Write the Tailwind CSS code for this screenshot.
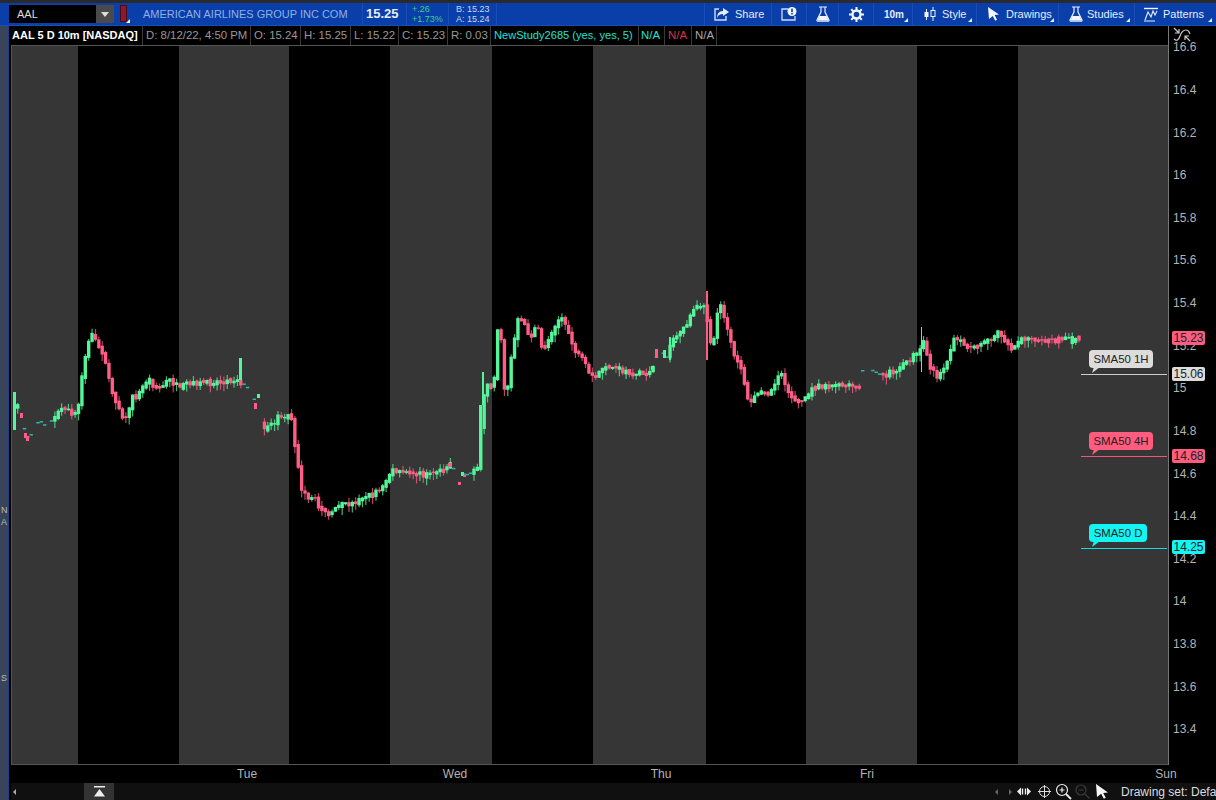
<!DOCTYPE html>
<html lang="en">
<head>
  <meta charset="UTF-8">
  <title>AAL chart</title>
  <script src="https://cdn.jsdelivr.net/npm/@tailwindcss/browser@4"></script>
</head>
<body class="bg-black w-[1216px] h-[800px] overflow-hidden font-['Liberation_Sans',Arial,sans-serif] text-[12px]">

  <!-- top strip -->
  <div class="h-[3px] bg-[#2a2a2c]"></div>

  <!-- blue header -->
  <header class="h-[23px] bg-[#0a3ea8] flex items-center text-white border-b border-[#1a4db5]">
    <div class="ml-[9px] w-[105px] h-[18px] bg-black flex items-center justify-between">
      <span class="pl-2 text-[11px] text-[#ddd]">AAL</span>
      <span class="w-[18px] h-[18px] bg-[#4a4a4a] flex items-center justify-center">
        <span class="w-0 h-0 border-x-[4px] border-x-transparent border-t-[5px] border-t-[#ddd]"></span>
      </span>
    </div>
    <div class="relative ml-[4px] w-[11px] h-[18px] flex justify-center">
      <span class="w-[7px] h-[17px] bg-[#8a1a2c] border border-[#4a0a18]"></span>
      <span class="absolute right-[-1px] bottom-0 w-0 h-0 border-l-[4px] border-l-transparent border-b-[4px] border-b-white"></span>
    </div>
    <div class="ml-[14px] w-[219px] text-[11px] text-[#8fb0e6] whitespace-nowrap">AMERICAN AIRLINES GROUP INC COM</div>
    <div class="w-[44px] h-full flex items-center pl-[3px] text-[13px] font-bold text-[#e8eefc] border-l border-[#1a4db5]">15.25</div>
    <div class="w-[43px] h-full flex flex-col justify-center pl-[5px] text-[9px] leading-[10px] text-[#3fd08a] border-x border-[#1a4db5]">
      <span>+.26</span><span>+1.73%</span>
    </div>
    <div class="w-[48px] h-full flex flex-col justify-center pl-[7px] text-[9px] leading-[10px] text-[#c9d8f5] border-r border-[#1a4db5]">
      <span>B: 15.23</span><span>A: 15.24</span>
    </div>

    <div class="ml-auto flex h-full text-[11px] text-[#e6edfb]">
      <div class="relative w-[68px] flex items-center pl-[9px] gap-[5px] border-x border-[#1a4db5]">
        <svg width="16" height="14" viewBox="0 0 16 14"><path d="M5 2H1v11h11V9" fill="none" stroke="#cfdcf5" stroke-width="1.4"/><path d="M9 1l6 4-6 4V7C6 7 4 8 3 11c0-4 2-7 6-7z" fill="#e8eefc"/></svg>
        <span>Share</span>
      </div>
      <div class="w-[35px] flex items-center justify-center border-r border-[#1a4db5]">
        <svg width="16" height="14" viewBox="0 0 16 14"><path d="M7 2H1v11h13V9" fill="none" stroke="#cfdcf5" stroke-width="1.3"/><circle cx="11" cy="4.5" r="4.5" fill="#f2f5fc"/><rect x="10.2" y="1.6" width="1.6" height="3.6" fill="#0a3ea8"/><rect x="10.2" y="6" width="1.6" height="1.5" fill="#0a3ea8"/></svg>
      </div>
      <div class="w-[32px] flex items-center justify-center border-r border-[#1a4db5]">
        <svg width="14" height="16" viewBox="0 0 14 16"><path d="M3 1h8M5 1v5L1 14q-.3 1.2 1 1.2h10q1.3 0 1-1.2L9 6V1" fill="none" stroke="#e8eefc" stroke-width="1.2"/><path d="M3.4 10h7.2l2 4.5H1.4z" fill="#f2f5fc"/></svg>
      </div>
      <div class="w-[35px] flex items-center justify-center border-r border-[#1a4db5]">
        <svg width="15" height="15" viewBox="0 0 15 15"><circle cx="7.5" cy="7.5" r="4" fill="none" stroke="#f2f5fc" stroke-width="2.4"/><path d="M7.5 0v3M7.5 12v3M0 7.5h3M12 7.5h3M2.2 2.2l2.1 2.1M10.7 10.7l2.1 2.1M2.2 12.8l2.1-2.1M10.7 4.3l2.1-2.1" stroke="#f2f5fc" stroke-width="2"/></svg>
      </div>
      <div class="relative w-[39px] flex items-center pl-[10px] border-r border-[#1a4db5] font-bold text-[10px]">
        10m<span class="absolute right-[4px] bottom-[3px] w-0 h-0 border-l-[4px] border-l-transparent border-b-[4px] border-b-[#e8eefc]"></span>
      </div>
      <div class="relative w-[64px] flex items-center pl-[11px] gap-[6px] border-r border-[#1a4db5]">
        <svg width="12" height="14" viewBox="0 0 12 14"><path d="M2.5 2v11M9 0v14" stroke="#e8eefc"/><rect x="0.5" y="5" width="4" height="5" fill="#f2f5fc"/><rect x="7" y="3.5" width="4" height="6" fill="#0a3ea8" stroke="#f2f5fc"/></svg>
        <span>Style</span><span class="absolute right-[4px] bottom-[3px] w-0 h-0 border-l-[4px] border-l-transparent border-b-[4px] border-b-[#e8eefc]"></span>
      </div>
      <div class="relative w-[82px] flex items-center pl-[11px] gap-[7px] border-r border-[#1a4db5]">
        <svg width="11" height="14" viewBox="0 0 11 14"><path d="M0 0l11 7.6-4.4.5 2.4 4.7-1.8.9-2.4-4.8L1 12z" fill="#f5f7fd"/></svg>
        <span>Drawings</span><span class="absolute right-[4px] bottom-[3px] w-0 h-0 border-l-[4px] border-l-transparent border-b-[4px] border-b-[#e8eefc]"></span>
      </div>
      <div class="relative w-[76px] flex items-center pl-[10px] gap-[4px] border-r border-[#1a4db5]">
        <svg width="14" height="16" viewBox="0 0 14 16"><path d="M3 1h8M5 1v5L1 14q-.3 1.2 1 1.2h10q1.3 0 1-1.2L9 6V1" fill="none" stroke="#e8eefc" stroke-width="1.2"/><path d="M3.4 10h7.2l2 4.5H1.4z" fill="#f2f5fc"/></svg>
        <span>Studies</span><span class="absolute right-[4px] bottom-[3px] w-0 h-0 border-l-[4px] border-l-transparent border-b-[4px] border-b-[#e8eefc]"></span>
      </div>
      <div class="relative w-[81px] flex items-center pl-[9px] gap-[5px]">
        <svg width="14" height="15" viewBox="0 0 14 15"><path d="M0 1.5h14" stroke="#f2f5fc" stroke-width="1.4"/><path d="M1 13L4 5l3 5 2-6 2 4 2-4" fill="none" stroke="#e8eefc" stroke-width="1.1"/><path d="M0 14h11" stroke="#e8eefc"/></svg>
        <span>Patterns</span><span class="absolute right-[4px] bottom-[3px] w-0 h-0 border-l-[4px] border-l-transparent border-b-[4px] border-b-[#e8eefc]"></span>
      </div>
    </div>
  </header>

  <div class="flex h-[774px]">
    <!-- left edge strip -->
    <div class="w-[11px] bg-black flex">
      <div class="w-[8px] h-full bg-[#38445a] flex flex-col pl-[1px] pt-[478px] text-[9px] leading-[12px] text-[#bbb]">
        <span>N</span><span>A</span><span class="mt-[144px]">S</span>
      </div>
      <div class="w-px h-full bg-[#1c3f8a]"></div>
    </div>

    <div class="w-[1205px] flex flex-col">
      <div class="flex h-[739px]">
        <!-- legend + chart -->
        <div class="w-[1157px] flex flex-col">
          <div class="h-[19px] flex items-center text-[11.4px] text-[#999] whitespace-nowrap">
            <div class="w-[131px] pl-[1px] text-[11px] font-bold text-white">AAL 5 D 10m [NASDAQ]</div>
            <div class="w-[108px] h-full flex items-center pl-[3px] border-l border-[#3a3a3a]">D: 8/12/22, 4:50 PM</div>
            <div class="w-[50px] h-full flex items-center pl-[3px] border-l border-[#3a3a3a]">O: 15.24</div>
            <div class="w-[50px] h-full flex items-center pl-[3px] border-l border-[#3a3a3a]">H: 15.25</div>
            <div class="w-[48px] h-full flex items-center pl-[3px] border-l border-[#3a3a3a]">L: 15.22</div>
            <div class="w-[49px] h-full flex items-center pl-[3px] border-l border-[#3a3a3a]">C: 15.23</div>
            <div class="w-[43px] h-full flex items-center pl-[3px] border-l border-[#3a3a3a]">R: 0.03</div>
            <div class="w-[148px] h-full flex items-center pl-[3px] border-l border-[#3a3a3a] text-[11.1px] text-[#22e0d2]">NewStudy2685 (yes, yes, 5)</div>
            <div class="w-[26px] h-full flex items-center pl-[2px] border-l border-[#3a3a3a] text-[#22e0d2]">N/A</div>
            <div class="w-[27px] h-full flex items-center pl-[3px] border-l border-[#3a3a3a] text-[#d8304f]">N/A</div>
            <div class="w-[26px] h-full flex items-center pl-[3px] border-x border-[#3a3a3a] text-[#aaa]">N/A</div>
          </div>

          <div class="relative h-[720px] border-y border-[#555] border-l border-l-[#555]">
            <!-- session bands -->
            <div class="flex h-full">
              <div class="w-[66px] bg-[#363636]"></div>
              <div class="w-[101px] bg-black"></div>
              <div class="w-[110px] bg-[#363636]"></div>
              <div class="w-[101px] bg-black"></div>
              <div class="w-[102px] bg-[#363636]"></div>
              <div class="w-[101px] bg-black"></div>
              <div class="w-[113px] bg-[#363636]"></div>
              <div class="w-[100px] bg-black"></div>
              <div class="w-[111px] bg-[#363636]"></div>
              <div class="w-[101px] bg-black"></div>
              <div class="flex-1 bg-[#363636]"></div>
            </div>

            <svg id="candles" class="absolute left-0 top-0 blur-[0.5px]" width="1156" height="718" viewBox="12 46 1156 718">
              <g stroke-width="1">
                <path d="M1081 374.500H1167" stroke="#cfcfcf"/>
                <path d="M1081 456.500H1167" stroke="#f0557c"/>
                <path d="M1081 548.500H1167" stroke="#19dada"/>
              </g>
              <path d="M1094 367l-2 6 8-6z" fill="#dcdcdc"/>
              <path d="M1094 449l-2 6 8-6z" fill="#ff5c80"/>
              <path d="M1094 541l-2 6 8-6z" fill="#13f4f4"/>
            </svg>

            <!-- study labels over the chart -->
            <div class="absolute left-[1077px] top-[304px] w-[64px] h-[18px] pt-[2px] rounded-[4px] bg-[#dcdcdc] text-[11.4px] text-[#222] flex items-center justify-center whitespace-nowrap">SMA50 1H</div>
            <div class="absolute left-[1077px] top-[386px] w-[64px] h-[18px] pt-[2px] rounded-[4px] bg-[#ff5c80] text-[11.4px] text-[#222] flex items-center justify-center whitespace-nowrap">SMA50 4H</div>
            <div class="absolute left-[1077px] top-[478px] w-[58px] h-[18px] pt-[2px] rounded-[4px] bg-[#13f4f4] text-[11.4px] text-[#222] flex items-center justify-center whitespace-nowrap">SMA50 D</div>
          </div>
        </div>

        <!-- price axis -->
        <div class="relative flex-1 border-l border-[#777] text-[12px] text-[#b4b4b4]">
          <svg class="absolute left-[4px] top-[1px]" width="18" height="15" viewBox="0 0 18 15" fill="none" stroke="#ccc" stroke-width="1.2">
            <path d="M1 1l5 5M6 2v4H2M17 14l-5-5M12 13V9h4" />
            <path d="M1 12c3 3 5 0 6-3s3-6 6-6 3 2 4 4" />
          </svg>
          <div class="flex flex-col pl-[4px]">
            <div class="h-[42.625px] flex items-center">16.6</div>
            <div class="h-[42.625px] flex items-center">16.4</div>
            <div class="h-[42.625px] flex items-center">16.2</div>
            <div class="h-[42.625px] flex items-center">16</div>
            <div class="h-[42.625px] flex items-center">15.8</div>
            <div class="h-[42.625px] flex items-center">15.6</div>
            <div class="h-[42.625px] flex items-center">15.4</div>
            <div class="h-[42.625px] flex items-center">15.2</div>
            <div class="h-[42.625px] flex items-center">15</div>
            <div class="h-[42.625px] flex items-center">14.8</div>
            <div class="h-[42.625px] flex items-center">14.6</div>
            <div class="h-[42.625px] flex items-center">14.4</div>
            <div class="h-[42.625px] flex items-center">14.2</div>
            <div class="h-[42.625px] flex items-center">14</div>
            <div class="h-[42.625px] flex items-center">13.8</div>
            <div class="h-[42.625px] flex items-center">13.6</div>
            <div class="h-[42.625px] flex items-center">13.4</div>
          </div>
          <div class="absolute left-[3px] top-[305px] w-[33px] h-[14px] rounded-[2px] bg-[#ff5c80] text-[#222] flex items-center justify-center">15.23</div>
          <div class="absolute left-[3px] top-[341px] w-[33px] h-[14px] rounded-[2px] bg-[#dcdcdc] text-[#222] flex items-center justify-center">15.06</div>
          <div class="absolute left-[3px] top-[423px] w-[33px] h-[14px] rounded-[2px] bg-[#ff5c80] text-[#222] flex items-center justify-center">14.68</div>
          <div class="absolute left-[3px] top-[514px] w-[33px] h-[14px] rounded-[2px] bg-[#13f4f4] text-[#222] flex items-center justify-center">14.25</div>
        </div>
      </div>

      <!-- time axis -->
      <div class="h-[18px] flex items-center text-[12px] text-[#b4b4b4]">
        <div class="w-[132px]"></div>
        <div class="w-[208px] text-center">Tue</div>
        <div class="w-[208px] text-center">Wed</div>
        <div class="w-[204px] text-center">Thu</div>
        <div class="w-[208px] text-center">Fri</div>
        <div class="w-[175px]"></div>
        <div class="w-[40px] text-center">Sun</div>
      </div>

      <!-- bottom bar -->
      <div class="h-[17px] bg-[#101010] flex items-center overflow-hidden whitespace-nowrap text-[12px] text-[#dcdcdc]">
        <span class="shrink-0 ml-[2px] w-0 h-0 border-y-[3px] border-y-transparent border-r-[3px] border-r-[#aaa]"></span>
        <div class="shrink-0 ml-[68px] w-[30px] h-[17px] bg-[#333] flex items-center justify-center">
          <svg width="13" height="11" viewBox="0 0 13 11"><path d="M1 .7h11" stroke="#eee" stroke-width="1.6"/><path d="M6.500 3l5.500 7.500H1z" fill="#eee"/></svg>
        </div>
        <span class="shrink-0 ml-[881px] w-0 h-0 border-y-[3px] border-y-transparent border-r-[3px] border-r-[#666]"></span>
        <span class="shrink-0 ml-[11px] w-0 h-0 border-y-[3px] border-y-transparent border-l-[3px] border-l-[#666]"></span>
        <svg class="shrink-0 ml-[5px]" width="14" height="9" viewBox="0 0 14 9"><path d="M0 4.500L4 .5v8zM14 4.500L10 .5v8z" fill="#eee"/><path d="M5.500 1.500v6M8.500 1.500v6" stroke="#eee" stroke-width="1.400"/></svg>
        <svg class="shrink-0 ml-[7px]" width="13" height="13" viewBox="0 0 13 13" fill="none" stroke="#ddd"><circle cx="6.500" cy="6.500" r="5"/><path d="M6.500 0v13M0 6.500h13"/></svg>
        <svg class="shrink-0 ml-[4px]" width="17" height="17" viewBox="0 0 17 17" fill="none" stroke="#eee" stroke-width="1.200"><circle cx="7" cy="7" r="5.500"/><path d="M4.500 7h5M7 4.500v5"/><path d="M11 11l5 5" stroke-width="1.800"/></svg>
        <svg class="shrink-0 ml-[3px]" width="15" height="15" viewBox="0 0 15 15" fill="none" stroke="#3c3c3c" stroke-width="1.200"><circle cx="6" cy="6" r="5"/><path d="M3.500 6h5M10 10l4.500 4.500"/></svg>
        <svg class="shrink-0 ml-[6px]" width="12" height="15" viewBox="0 0 12 15"><path d="M0 0l12 8.500-4.800.5 2.600 4.800-2 1-2.600-5L1 13z" fill="#f5f5f5"/></svg>
        <span class="shrink-0 ml-[13px] text-[12px]">Drawing set: Default</span>
      </div>
    </div>
  </div>

  <script>
    // close prices as [x, y] in page pixels, read off the picture
    const path = [[16,408],[20,414],[25,437],[30,433],[35,420],[42,425],[50,420],[58,410],[66,408],[72,418],[77,405],[81,370],[85,350],[90,332],[96,345],[102,352],[107,380],[112,395],[118,410],[124,420],[130,398],[138,393],[146,378],[152,385],[160,388],[166,380],[172,382],[178,390],[184,384],[200,383],[220,381],[236,379],[250,392],[256,405],[262,432],[265,428],[272,424],[276,415],[282,418],[288,411],[290,420],[293,442],[296,460],[300,490],[303,495],[307,497],[312,497],[316,505],[322,510],[328,515],[332,512],[338,503],[345,505],[352,503],[358,497],[362,497],[370,495],[377,490],[384,482],[390,470],[395,473],[400,473],[408,472],[415,472],[422,476],[430,473],[436,470],[445,466],[450,465],[458,480],[462,474],[470,472],[476,465],[482,395],[488,380],[492,395],[494,345],[497,320],[500,345],[502,385],[505,392],[508,370],[512,340],[516,320],[520,320],[524,325],[528,340],[532,325],[536,328],[540,348],[545,345],[550,333],[556,318],[562,320],[568,335],[574,350],[578,358],[583,360],[588,375],[593,378],[597,372],[605,368],[615,368],[622,372],[630,372],[640,374],[647,372],[651,368],[656,352],[662,355],[665,354],[668,345],[672,340],[678,332],[685,325],[690,310],[695,306],[704,305],[708,340],[711,350],[714,325],[718,300],[722,318],[727,330],[732,355],[738,360],[742,380],[746,397],[750,400],[754,392],[760,392],[766,393],[772,385],[778,372],[785,388],[790,395],[795,400],[800,402],[805,398],[810,388],[817,385],[830,385],[845,386],[858,388],[864,356],[867,362],[870,371],[877,371],[883,376],[888,373],[893,372],[897,367],[903,365],[908,360],[913,355],[918,350],[922,343],[925,355],[928,365],[932,370],[936,378],[940,372],[946,358],[952,340],[958,340],[965,345],[970,347],[975,345],[982,342],[990,340],[997,332],[1002,338],[1008,345],[1012,348],[1016,340],[1022,336],[1030,340],[1040,342],[1050,340],[1060,338],[1070,340],[1078,337]];

    // thin pre-market stretches where only a few ticks print
    const sparse = [[16,50],[242,262],[452,470],[652,668],[860,880]];
    // single bars placed by hand: x, top, bottom, colour, bar width
    const extra = [[13,392,430,'g',3],[20,413,418,'r',3],[24,433,438,'r',3],[26,436,441,'r',3],[239,358,380,'g',3],[254,403,409,'r',3],[257,394,398,'g',3],[442,471,473,'r',3],[448,463,467,'r',4],[458,482,485,'r',3],[461,472,476,'g',3],[463,475,477,'r',3],[479,405,462,'g',3],[482,372,405,'g',2],[651,366,370,'g',3],[655,349,358,'r',3],[663,350,358,'g',3],[669,337,360,'g',2],[674,341,343,'g',3],[679,331,334,'g',3],[706,291,360,'r',2],[921,327,372,'g',1]];

    let seed = 7;
    const rnd = () => (seed = (seed * 16807) % 2147483647) / 2147483647;

    const yAt = x => {
      for (let i = 1; i < path.length; i++) {
        if (x <= path[i][0]) {
          const a = path[i - 1], b = path[i];
          return a[1] + (b[1] - a[1]) * (x - a[0]) / (b[0] - a[0]);
        }
      }
      return path[path.length - 1][1];
    };

    const GREEN = '#55f59a', RED = '#ff5c86', TEAL = '#2fb8a8';
    let svg = '';
    const bar = (x, top, bot, color, wTop, wBot, w = 3.4) => {
      if (wTop !== undefined) svg += `<path d="M${x + 1.7} ${wTop}V${wBot}" stroke="${color}" stroke-width="1.200" opacity=".75"/>`;
      svg += `<rect x="${x}" y="${top}" width="${w}" height="${Math.max(bot - top, 1.500)}" fill="${color}"/>`;
    };

    let prev = yAt(16);
    for (let x = 16; x < 1079; x += 3.38) {
      const y = yAt(x) + (rnd() - .5) * 5;
      const isSparse = sparse.some(r => x > r[0] && x < r[1]);
      if (isSparse) {
        if (rnd() > .4) bar(x, y, y + 1.500, TEAL);
        prev = y;
        continue;
      }
      // bodies overlap the neighbours a little, as the real bars do
      const top = Math.min(prev, y) - rnd() * 1.500, bot = Math.max(prev, y) + rnd() * 2.500;
      const color = x > 1040 ? (rnd() < .75 ? RED : GREEN) : (y < prev ? GREEN : RED);
      bar(x, top, bot, color, top - rnd() * 5, bot + rnd() * 7);
      prev = y;
    }
    extra.forEach(t => bar(t[0], t[1], t[2], t[3] === 'g' ? GREEN : RED, undefined, undefined, t[4]));

    document.getElementById('candles').insertAdjacentHTML('beforeend', svg);
  </script>
</body>
</html>
